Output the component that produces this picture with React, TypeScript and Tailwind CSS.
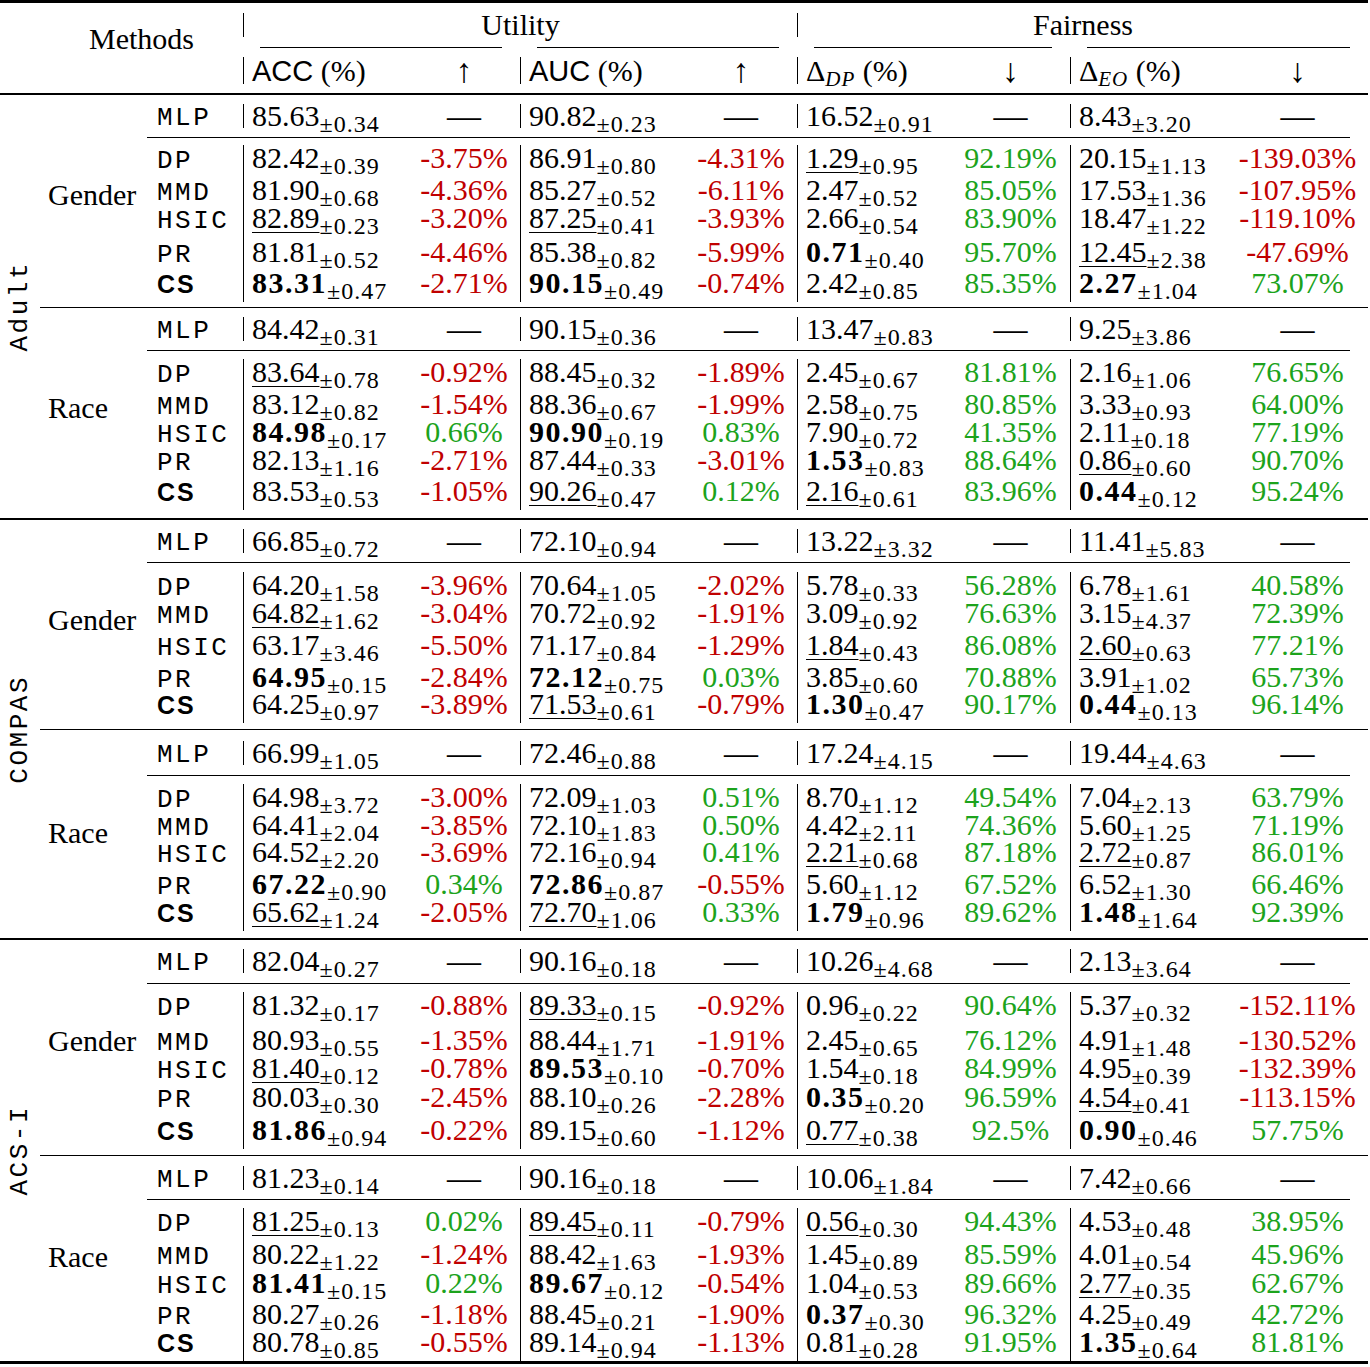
import clsx from "clsx";

const SERIF = "font-['Liberation_Serif','Times_New_Roman',serif]";
const MONO = "font-['Liberation_Mono','Courier_New',monospace]";
const SANS = "font-['Liberation_Sans',Arial,sans-serif]";

type Metric = { v: string; s: string; b: boolean; u: boolean; p: string };

// "*" = best (bold), "_" = second best (underline); fields: value|std|relative change
function parse(str: string): Metric {
  let t = str;
  let b = false;
  let u = false;
  if (t[0] === "*") {
    b = true;
    t = t.slice(1);
  }
  if (t[0] === "_") {
    u = true;
    t = t.slice(1);
  }
  const [v, s, p = ""] = t.split("|");
  return { v, s, b, u, p };
}

// column widths: value cell + relative-change cell for ACC, AUC, ΔDP, ΔEO
const COLS = [
  { val: "w-[165px]", pct: "w-[112px]", head: "w-[277px]" },
  { val: "w-[165px]", pct: "w-[112px]", head: "w-[277px]" },
  { val: "w-[154px]", pct: "w-[119px]", head: "w-[273px]" },
  { val: "w-[157px]", pct: "w-[141px]", head: "w-[298px]" },
];

type Group = {
  attr: string;
  attrPad: string;
  mlpPad: string;
  blockPad: string;
  h: string[];
  mlp: string[];
  rows: [string, string[]][];
};

type Section = { name: string; rule: string; groups: Group[] };

const sections: Section[] = [
  {
    name: "Adult",
    rule: "border-b-2",
    groups: [
      {
        attr: "Gender",
        attrPad: "pt-[87px]",
        mlpPad: "pt-[5px] pb-[5px]",
        blockPad: "pt-[7px] pb-[5px]",
        h: ["h-[32px]", "h-[28px]", "h-[34px]", "h-[31px]", "h-[32px]"],
        mlp: ["85.63|0.34", "90.82|0.23", "16.52|0.91", "8.43|3.20"],
        rows: [
          ["DP", ["82.42|0.39|-3.75%", "86.91|0.80|-4.31%", "_1.29|0.95|92.19%", "20.15|1.13|-139.03%"]],
          ["MMD", ["81.90|0.68|-4.36%", "85.27|0.52|-6.11%", "2.47|0.52|85.05%", "17.53|1.36|-107.95%"]],
          ["HSIC", ["_82.89|0.23|-3.20%", "_87.25|0.41|-3.93%", "2.66|0.54|83.90%", "18.47|1.22|-119.10%"]],
          ["PR", ["81.81|0.52|-4.46%", "85.38|0.82|-5.99%", "*0.71|0.40|95.70%", "_12.45|2.38|-47.69%"]],
          ["CS", ["*83.31|0.47|-2.71%", "*90.15|0.49|-0.74%", "2.42|0.85|85.35%", "*2.27|1.04|73.07%"]],
        ],
      },
      {
        attr: "Race",
        attrPad: "pt-[87px]",
        mlpPad: "pt-[5px] pb-[5px]",
        blockPad: "pt-[8px] pb-[8px]",
        h: ["h-[32px]", "h-[28px]", "h-[28px]", "h-[31px]", "h-[32px]"],
        mlp: ["84.42|0.31", "90.15|0.36", "13.47|0.83", "9.25|3.86"],
        rows: [
          ["DP", ["_83.64|0.78|-0.92%", "88.45|0.32|-1.89%", "2.45|0.67|81.81%", "2.16|1.06|76.65%"]],
          ["MMD", ["83.12|0.82|-1.54%", "88.36|0.67|-1.99%", "2.58|0.75|80.85%", "3.33|0.93|64.00%"]],
          ["HSIC", ["*84.98|0.17|0.66%", "*90.90|0.19|0.83%", "7.90|0.72|41.35%", "2.11|0.18|77.19%"]],
          ["PR", ["82.13|1.16|-2.71%", "87.44|0.33|-3.01%", "*1.53|0.83|88.64%", "_0.86|0.60|90.70%"]],
          ["CS", ["83.53|0.53|-1.05%", "_90.26|0.47|0.12%", "_2.16|0.61|83.96%", "*0.44|0.12|95.24%"]],
        ],
      },
    ],
  },
  {
    name: "COMPAS",
    rule: "border-b-2",
    groups: [
      {
        attr: "Gender",
        attrPad: "pt-[87px]",
        mlpPad: "pt-[5px] pb-[5px]",
        blockPad: "pt-[9px] pb-[6px]",
        h: ["h-[28px]", "h-[32px]", "h-[32px]", "h-[27px]", "h-[32px]"],
        mlp: ["66.85|0.72", "72.10|0.94", "13.22|3.32", "11.41|5.83"],
        rows: [
          ["DP", ["64.20|1.58|-3.96%", "70.64|1.05|-2.02%", "5.78|0.33|56.28%", "6.78|1.61|40.58%"]],
          ["MMD", ["_64.82|1.62|-3.04%", "70.72|0.92|-1.91%", "3.09|0.92|76.63%", "3.15|4.37|72.39%"]],
          ["HSIC", ["63.17|3.46|-5.50%", "71.17|0.84|-1.29%", "_1.84|0.43|86.08%", "_2.60|0.63|77.21%"]],
          ["PR", ["*64.95|0.15|-2.84%", "*72.12|0.75|0.03%", "3.85|0.60|70.88%", "3.91|1.02|65.73%"]],
          ["CS", ["64.25|0.97|-3.89%", "_71.53|0.61|-0.79%", "*1.30|0.47|90.17%", "*0.44|0.13|96.14%"]],
        ],
      },
      {
        attr: "Race",
        attrPad: "pt-[90px]",
        mlpPad: "pt-[7px] pb-[6px]",
        blockPad: "pt-[8px] pb-[7px]",
        h: ["h-[28px]", "h-[27px]", "h-[32px]", "h-[28px]", "h-[32px]"],
        mlp: ["66.99|1.05", "72.46|0.88", "17.24|4.15", "19.44|4.63"],
        rows: [
          ["DP", ["64.98|3.72|-3.00%", "72.09|1.03|0.51%", "8.70|1.12|49.54%", "7.04|2.13|63.79%"]],
          ["MMD", ["64.41|2.04|-3.85%", "72.10|1.83|0.50%", "4.42|2.11|74.36%", "5.60|1.25|71.19%"]],
          ["HSIC", ["64.52|2.20|-3.69%", "72.16|0.94|0.41%", "_2.21|0.68|87.18%", "_2.72|0.87|86.01%"]],
          ["PR", ["*67.22|0.90|0.34%", "*72.86|0.87|-0.55%", "5.60|1.12|67.52%", "6.52|1.30|66.46%"]],
          ["CS", ["_65.62|1.24|-2.05%", "_72.70|1.06|0.33%", "*1.79|0.96|89.62%", "*1.48|1.64|92.39%"]],
        ],
      },
    ],
  },
  {
    name: "ACS-I",
    rule: "",
    groups: [
      {
        attr: "Gender",
        attrPad: "pt-[88px]",
        mlpPad: "pt-[5px] pb-[6px]",
        blockPad: "pt-[8px] pb-[6px]",
        h: ["h-[35px]", "h-[28px]", "h-[29px]", "h-[33px]", "h-[32px]"],
        mlp: ["82.04|0.27", "90.16|0.18", "10.26|4.68", "2.13|3.64"],
        rows: [
          ["DP", ["81.32|0.17|-0.88%", "_89.33|0.15|-0.92%", "0.96|0.22|90.64%", "5.37|0.32|-152.11%"]],
          ["MMD", ["80.93|0.55|-1.35%", "88.44|1.71|-1.91%", "2.45|0.65|76.12%", "4.91|1.48|-130.52%"]],
          ["HSIC", ["_81.40|0.12|-0.78%", "*89.53|0.10|-0.70%", "1.54|0.18|84.99%", "4.95|0.39|-132.39%"]],
          ["PR", ["80.03|0.30|-2.45%", "88.10|0.26|-2.28%", "*0.35|0.20|96.59%", "_4.54|0.41|-113.15%"]],
          ["CS", ["*81.86|0.94|-0.22%", "89.15|0.60|-1.12%", "_0.77|0.38|92.5%", "*0.90|0.46|57.75%"]],
        ],
      },
      {
        attr: "Race",
        attrPad: "pt-[88px]",
        mlpPad: "pt-[6px] pb-[5px]",
        blockPad: "pt-[8px] pb-[0px]",
        h: ["h-[33px]", "h-[29px]", "h-[31px]", "h-[28px]", "h-[32px]"],
        mlp: ["81.23|0.14", "90.16|0.18", "10.06|1.84", "7.42|0.66"],
        rows: [
          ["DP", ["_81.25|0.13|0.02%", "_89.45|0.11|-0.79%", "_0.56|0.30|94.43%", "4.53|0.48|38.95%"]],
          ["MMD", ["80.22|1.22|-1.24%", "88.42|1.63|-1.93%", "1.45|0.89|85.59%", "4.01|0.54|45.96%"]],
          ["HSIC", ["*81.41|0.15|0.22%", "*89.67|0.12|-0.54%", "1.04|0.53|89.66%", "_2.77|0.35|62.67%"]],
          ["PR", ["80.27|0.26|-1.18%", "88.45|0.21|-1.90%", "*0.37|0.30|96.32%", "4.25|0.49|42.72%"]],
          ["CS", ["80.78|0.85|-0.55%", "89.14|0.94|-1.13%", "0.81|0.28|91.95%", "*1.35|0.64|81.81%"]],
        ],
      },
    ],
  },
];

function Num({ m }: { m: Metric }) {
  return (
    <span className="whitespace-nowrap">
      <span
        className={clsx(
          m.b && "font-bold tracking-[1.5px]",
          m.u && "underline decoration-1 underline-offset-[4px]"
        )}
      >
        {m.v}
      </span>
      <sub className="text-[24px] tracking-[1px]">±{m.s}</sub>
    </span>
  );
}

const Bar = ({ h }: { h: string }) => <span className={clsx("w-px shrink-0 bg-black", h)} />;

function Method({ name }: { name: string }) {
  return (
    <div className="w-[96px] shrink-0 pl-[10px] leading-[26px]">
      {name === "CS" ? (
        <span className={clsx(SANS, "text-[25px] font-bold tracking-[2px]")}>CS</span>
      ) : (
        <span className={clsx(MONO, "text-[26px] tracking-[2.5px]")}>{name}</span>
      )}
    </div>
  );
}

function MlpRow({ cells }: { cells: string[] }) {
  return (
    <div className="flex h-[32px] items-center">
      <Method name="MLP" />
      {cells.map((c, i) => (
        <div key={i} className="flex items-center">
          <div className={clsx(COLS[i].val, "flex items-center")}>
            <Bar h="h-[24px]" />
            <div className="pl-[8px] leading-[26px]">
              <Num m={parse(c)} />
            </div>
          </div>
          <div className={clsx(COLS[i].pct, "text-center text-[34px] leading-[26px]")}>—</div>
        </div>
      ))}
    </div>
  );
}

function BlockRow({ name, cells, h }: { name: string; cells: string[]; h: string }) {
  return (
    <div className={clsx("flex", h)}>
      <Method name={name} />
      {cells.map((c, i) => {
        const m = parse(c);
        return (
          <div key={i} className="flex">
            <div className={clsx(COLS[i].val, "border-l border-black pl-[8px] leading-[26px]")}>
              <Num m={m} />
            </div>
            <div
              className={clsx(
                COLS[i].pct,
                "text-center leading-[26px] whitespace-nowrap",
                m.p.startsWith("-") ? "text-[#c00000]" : "text-[#1ca31c]"
              )}
            >
              {m.p}
            </div>
          </div>
        );
      })}
    </div>
  );
}

function GroupBlock({ g }: { g: Group }) {
  return (
    <div className="flex">
      <div className={clsx("w-[107px] shrink-0 pl-[8px] leading-[26px]", g.attrPad)}>{g.attr}</div>
      <div className="flex-1">
        <div className={g.mlpPad}>
          <MlpRow cells={g.mlp} />
        </div>
        <div className="mr-[18px] h-px bg-black" />
        <div className={g.blockPad}>
          {g.rows.map(([name, cells], i) => (
            <BlockRow key={name} name={name} cells={cells} h={g.h[i]} />
          ))}
        </div>
      </div>
    </div>
  );
}

function Header() {
  const heads = [
    { label: <span className={clsx(SANS, "text-[29px]")}>ACC</span>, arrow: "↑" },
    { label: <span className={clsx(SANS, "text-[29px]")}>AUC</span>, arrow: "↑" },
    {
      label: (
        <span>
          Δ<sub className="text-[21px] italic tracking-[1px]">DP</sub>
        </span>
      ),
      arrow: "↓",
    },
    {
      label: (
        <span>
          Δ<sub className="text-[21px] italic tracking-[1px]">EO</sub>
        </span>
      ),
      arrow: "↓",
    },
  ];
  return (
    <div className="flex h-[90px]">
      <div className="w-[243px] shrink-0 pl-[40px] pt-[20px] text-center leading-[32px]">Methods</div>
      <div className="flex flex-1 flex-col">
        <div className="flex h-[44px]">
          <div className="flex w-[554px] items-center">
            <Bar h="h-[24px]" />
            <div className="flex-1 text-center leading-[32px]">Utility</div>
          </div>
          <div className="flex w-[571px] items-center">
            <Bar h="h-[24px]" />
            <div className="flex-1 text-center leading-[32px]">Fairness</div>
          </div>
        </div>
        <div className="flex">
          {COLS.map((c, i) => (
            <div key={i} className={c.head}>
              <div className="ml-[17px] mr-[18px] h-px bg-black" />
            </div>
          ))}
        </div>
        <div className="flex h-[45px] items-center">
          {heads.map((hd, i) => (
            <div key={i} className="flex items-center">
              <div className={clsx(COLS[i].val, "flex items-center")}>
                <Bar h="h-[27px]" />
                <div className="whitespace-nowrap pl-[8px] leading-[32px]">
                  {hd.label} (%)
                </div>
              </div>
              <div className={clsx(COLS[i].pct, "text-center text-[34px] leading-[32px]")}>{hd.arrow}</div>
            </div>
          ))}
        </div>
      </div>
    </div>
  );
}

export default function App() {
  return (
    <div className="min-h-screen bg-white">
      <div className={clsx(SERIF, "w-[1368px] border-y-[3px] border-black text-[30px] text-black")}>
        <Header />
        <div className="h-[2px] bg-black" />
        {sections.map((sec) => (
          <div key={sec.name} className={clsx("flex border-black", sec.rule)}>
            <div className="flex w-[40px] shrink-0 items-center justify-center">
              <span className={clsx(MONO, "rotate-180 text-[26px] tracking-[2.5px] [writing-mode:vertical-rl]")}>
                {sec.name}
              </span>
            </div>
            <div className="flex-1">
              <GroupBlock g={sec.groups[0]} />
              <div className="h-px bg-black" />
              <GroupBlock g={sec.groups[1]} />
            </div>
          </div>
        ))}
      </div>
    </div>
  );
}
